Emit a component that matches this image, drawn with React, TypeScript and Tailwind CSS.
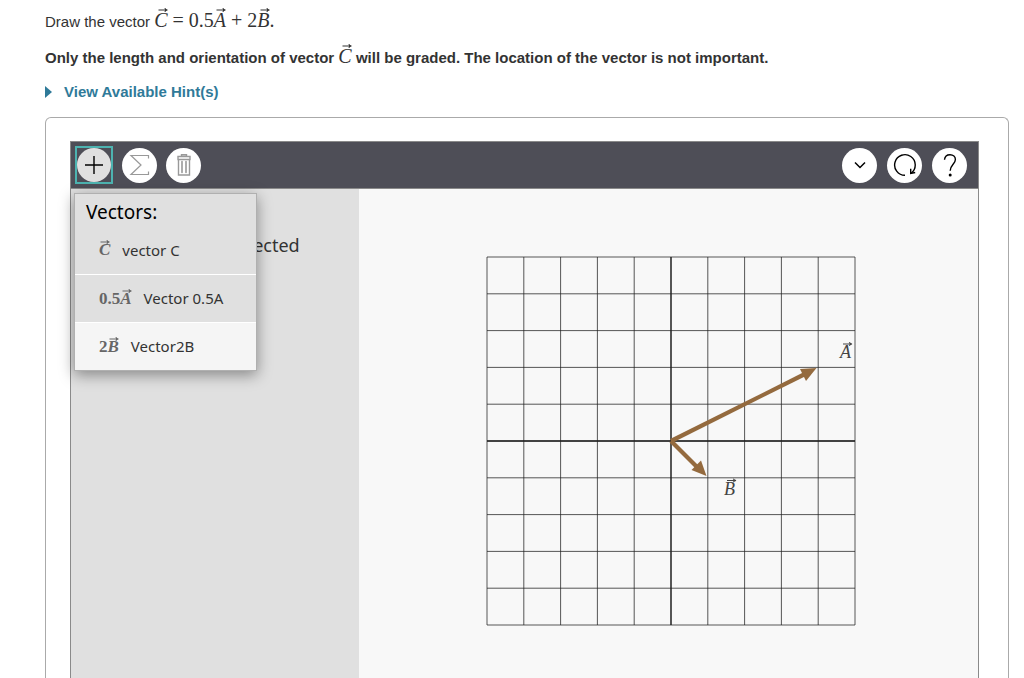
import React, { useState } from "react";
import clsx from "clsx";

const CELL = 368 / 10;
const lines = Array.from({ length: 11 }, (_, i) => i);

const menuItems = [
  { id: "c", coefficient: "", letter: "C", label: "vector C" },
  { id: "a", coefficient: "0.5", letter: "A", label: "Vector 0.5A" },
  { id: "b", coefficient: "2", letter: "B", label: "Vector2B" },
];

// Italic letter with an arrow over it
function Vec({ letter }: { letter: string }) {
  return (
    <span className="relative inline-block italic">
      {letter}
      <svg
        viewBox="0 0 10 6"
        className="absolute -top-px right-0 h-[6px] w-[10px]"
        fill="none"
        stroke="currentColor"
        strokeWidth="1.1"
        aria-hidden="true"
      >
        <path d="M0.500 3h8.500M6.800 1.200Q7.400 2.600 9.400 3Q7.400 3.400 6.800 4.800" />
      </svg>
    </span>
  );
}

function RoundButton({ label, children }: { label: string; children: React.ReactNode }) {
  return (
    <button
      aria-label={label}
      className="flex size-[35px] shrink-0 cursor-pointer items-center justify-center rounded-full bg-white text-black"
    >
      {children}
    </button>
  );
}

function SumIcon() {
  return (
    <svg viewBox="0 0 24 24" className="size-6" fill="none" stroke="#999" strokeWidth="1.2">
      <path d="M20.5 5.500V2.500H3L13 12L3 21.500H20.500V18.500" />
    </svg>
  );
}

function TrashIcon() {
  return (
    <svg viewBox="0 0 24 24" className="size-6" fill="none" stroke="#999" strokeWidth="1.4">
      <path d="M9.500 3.500V1.700h5v1.800M6 3.500h12v3H6zM6.500 6.500v15.500h11V6.500" />
      <path d="M10 8.500v11M14 8.500v11" strokeWidth="1.6" strokeLinecap="round" />
    </svg>
  );
}

function ResetIcon() {
  return (
    <svg viewBox="0 0 24 24" className="size-6" fill="none" stroke="currentColor" strokeWidth="1.4">
      <path d="M12 22.300A10.300 10.300 0 1 1 18.300 20.100" />
      <path d="M17.700 15.800V20.500L22.200 19.500" />
    </svg>
  );
}

function HelpIcon() {
  return (
    <svg viewBox="0 0 24 24" className="size-6" fill="none" stroke="currentColor" strokeWidth="1.4">
      <path d="M6.500 6.800C6.800 3.600 9 1.700 12 1.700C15.200 1.700 17.400 3.800 17.400 6.600C17.400 11 12.200 11.800 12.200 17.800" />
      <circle cx="12.200" cy="22" r="1.500" fill="currentColor" stroke="none" />
    </svg>
  );
}

function VectorGrid() {
  return (
    <svg viewBox="0 0 370 370" className="h-[370px] w-[370px] shrink-0" role="img" aria-label="Vector grid">
      <g transform="translate(1 1)">
        {lines.map((i) => (
          <g key={i} stroke="#222" strokeOpacity="0.85" strokeWidth={i === 5 ? 1.8 : 0.9}>
            <line x1={i * CELL} y1="0" x2={i * CELL} y2="368" />
            <line x1="0" y1={i * CELL} x2="368" y2={i * CELL} />
          </g>
        ))}
        <g stroke="#946a3e" strokeWidth="4.2">
          <line x1="184" y1="184" x2="318" y2="117" />
          <line x1="184" y1="184" x2="211" y2="211" />
        </g>
        <g fill="#946a3e">
          <polygon points="329.500,111 313,112 319,124" />
          <polygon points="219.500,219 214,203.500 204.500,213" />
        </g>
        <g fill="#444" fontFamily="Liberation Serif, serif" fontSize="18" fontStyle="italic">
          <text x="353" y="101">A</text>
          <text x="237" y="238">B</text>
        </g>
        <g fill="none" stroke="#444" strokeWidth="1.1">
          <path d="M356 87h8.500M362.300 85.200Q363 86.600 365 87Q363 87.400 362.300 88.800" />
          <path d="M240 223.500h8.500M246.300 221.700Q247 223.100 249 223.500Q247 223.900 246.300 225.300" />
        </g>
      </g>
    </svg>
  );
}

export default function App() {
  const [menuOpen, setMenuOpen] = useState(true);

  return (
    <main className="flex h-screen flex-col overflow-hidden bg-white pr-[15px] pl-[45px] font-['Liberation_Sans',sans-serif] text-[15px] text-[#333]">
      <p className="mt-2 leading-6">
        Draw the vector{" "}
        <span className="font-['Liberation_Serif',serif] text-xl leading-6">
          <Vec letter="C" />
          <span className="mx-[5px]">=</span>0.5
          <Vec letter="A" />
          <span className="mx-[5px]">+</span>2<Vec letter="B" />.
        </span>
      </p>
      <p className="mt-[10px] leading-6 font-bold">
        Only the length and orientation of vector{" "}
        <span className="font-['Liberation_Serif',serif] text-xl leading-6 font-normal">
          <Vec letter="C" />
        </span>{" "}
        will be graded. The location of the vector is not important.
      </p>
      <a href="#hints" className="mt-[10px] flex items-center gap-3 leading-6 font-bold text-[#2f7a99]">
        <svg viewBox="0 0 7 12" className="h-3 w-[7px]" fill="currentColor" aria-hidden="true">
          <path d="M0 0L7 6L0 12z" />
        </svg>
        View Available Hint(s)
      </a>

      <section className="mt-[13px] flex flex-1 flex-col rounded-t-md border border-b-0 border-[#aaa] pt-[23px] pr-[29px] pl-6">
        <div className="flex flex-1 flex-col border border-b-0 border-[#8a8a8a] font-['Noto_Sans',sans-serif]">
          <div className="flex items-center justify-between border-b border-[#8a8a8a] bg-[#4e4e57] py-1 pr-[11px] pl-1">
            <div className="flex items-center gap-[9px]">
              <button
                aria-label="Add vector"
                aria-expanded={menuOpen}
                onClick={() => setMenuOpen(!menuOpen)}
                className="flex size-[38px] cursor-pointer items-center justify-center border-2 border-[#4db3b0]"
              >
                <span className="flex size-[34px] items-center justify-center rounded-full bg-[#e0e0e0]">
                  <svg viewBox="0 0 20 20" className="size-5" stroke="#000" strokeWidth="1.4">
                    <path d="M10 1v18M1 10h18" />
                  </svg>
                </span>
              </button>
              <RoundButton label="Sum">
                <SumIcon />
              </RoundButton>
              <RoundButton label="Delete">
                <TrashIcon />
              </RoundButton>
            </div>
            <div className="flex items-center gap-[10px]">
              <RoundButton label="More">
                <svg viewBox="0 0 12 12" className="size-3" fill="none" stroke="currentColor" strokeWidth="1.5">
                  <path d="M1 3.500L6 8.500L11 3.500" />
                </svg>
              </RoundButton>
              <RoundButton label="Reset">
                <ResetIcon />
              </RoundButton>
              <RoundButton label="Help">
                <HelpIcon />
              </RoundButton>
            </div>
          </div>

          <div className="relative flex flex-1 bg-[#f8f8f8]">
            <aside className="w-72 shrink-0 bg-[#e0e0e0] pt-11 pr-1 text-center text-lg leading-6">
              No element selected
            </aside>
            <div className="flex-1 pt-[67px] pl-[127px]">
              <VectorGrid />
            </div>

            {menuOpen && (
              <div className="absolute top-1 left-[3px] w-[183px] border border-[#b0b0b0] bg-[#e0e0e0] shadow-[0_4px_14px_rgba(0,0,0,0.4)]">
                <h2 className="px-[11px] pt-1 text-[19px] leading-7 text-black">Vectors:</h2>
                <ul>
                  {menuItems.map((item, i) => (
                    <li key={item.id} className={clsx("h-12", i > 0 && "border-t border-white")}>
                      <button
                        className={clsx(
                          "flex h-full w-full cursor-pointer items-center gap-3 px-6 text-[15px]",
                          item.id === "b" && "bg-[#f5f5f5]"
                        )}
                      >
                        <span className="font-['Liberation_Serif',serif] text-[17px] leading-5 font-bold text-[#666]">
                          {item.coefficient}
                          <Vec letter={item.letter} />
                        </span>
                        {item.label}
                      </button>
                    </li>
                  ))}
                </ul>
              </div>
            )}
          </div>
        </div>
      </section>
    </main>
  );
}
